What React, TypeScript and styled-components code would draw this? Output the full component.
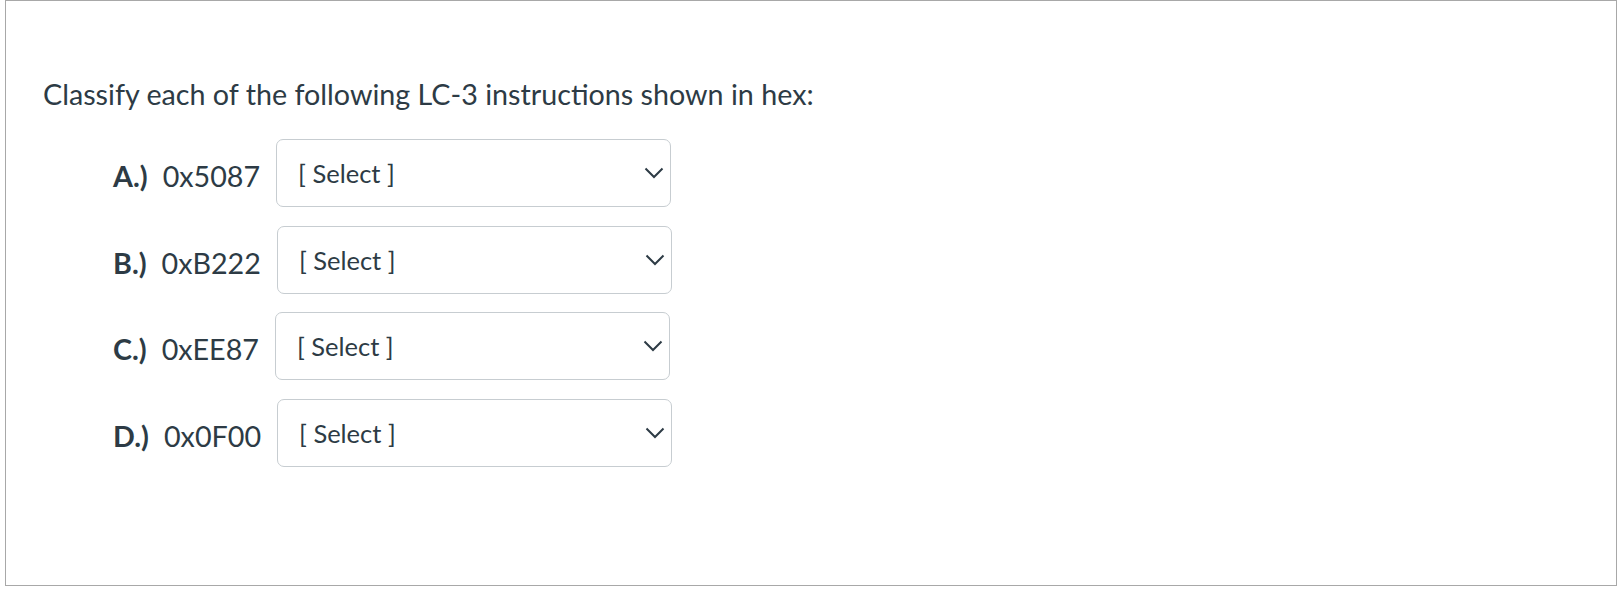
import styled, { createGlobalStyle } from "styled-components";

const GlobalStyle = createGlobalStyle`
  html, body {
    margin: 0;
    padding: 0;
    background: #ffffff;
  }
  body {
    font-family: Lato, "Noto Sans", sans-serif;
    color: #2d3b45;
  }
`;

const Page = styled.div`
  padding: 0 1px 0 5px;
`;

const QuestionBox = styled.div`
  box-sizing: border-box;
  height: 586px;
  border: 1px solid #a8a8a8;
  padding: 72px 36px 0 37px;
`;

const Prompt = styled.p`
  margin: 0 0 24px;
  font-size: 28.7px;
  line-height: 42px;
`;

const Rows = styled.div`
  display: flex;
  flex-direction: column;
  gap: 18.5px;
  padding-left: 70px;
`;

const Row = styled.div`
  display: flex;
  align-items: center;
`;

const Label = styled.span`
  font-size: 28.7px;
  line-height: 42px;
  margin-top: 6px;
  display: flex;
  gap: 15px;
  margin-right: 16px;
`;

const Letter = styled.b`
  font-weight: 700;
`;

const SelectBox = styled.div`
  box-sizing: border-box;
  width: 395px;
  height: 68px;
  border: 1px solid #c7cdd1;
  border-radius: 7px;
  display: flex;
  align-items: center;
  justify-content: space-between;
  padding: 0 6px 0 21px;
  font-size: 25.5px;
  color: #2d3b45;
`;

const Chevron = () => (
  <svg width="20" height="12" viewBox="0 0 20 12" fill="none">
    <path d="M1.5 1.5 L10 10 L18.5 1.5" stroke="#2d3b45" strokeWidth="2" />
  </svg>
);

const items = [
  { letter: "A.)", hex: "0x5087" },
  { letter: "B.)", hex: "0xB222" },
  { letter: "C.)", hex: "0xEE87" },
  { letter: "D.)", hex: "0x0F00" },
];

export default function App() {
  return (
    <>
      <GlobalStyle />
      <Page>
        <QuestionBox>
          <Prompt>Classify each of the following LC-3 instructions shown in hex:</Prompt>
          <Rows>
            {items.map((item) => (
              <Row key={item.letter}>
                <Label>
                  <Letter>{item.letter}</Letter>
                  <span>{item.hex}</span>
                </Label>
                <SelectBox>
                  <span>[ Select ]</span>
                  <Chevron />
                </SelectBox>
              </Row>
            ))}
          </Rows>
        </QuestionBox>
      </Page>
    </>
  );
}
